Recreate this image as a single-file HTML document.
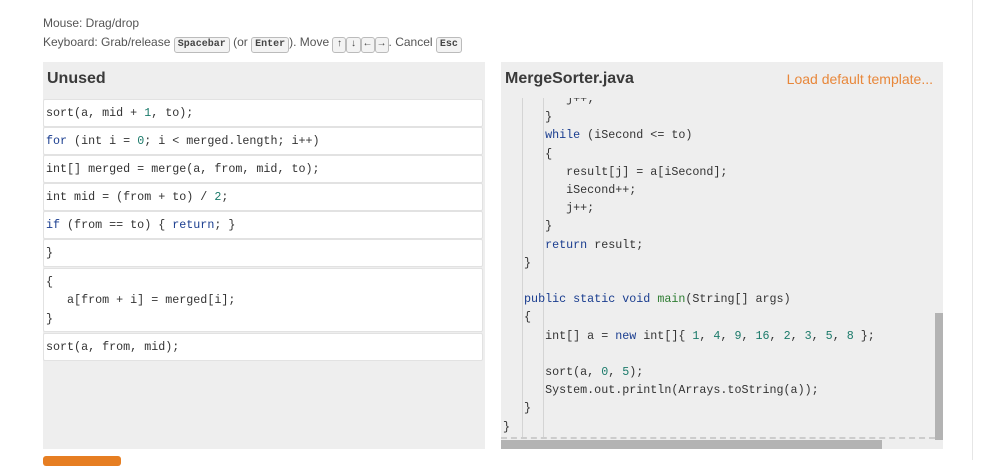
<!DOCTYPE html>
<html><head><meta charset="utf-8"><style>
body{margin:0;width:991px;height:460px;overflow:hidden;background:#fff;font-family:"Liberation Sans",sans-serif;position:relative}
.vl{position:absolute;left:972px;top:0;width:1px;height:460px;background:#e6e6e6}
.info{position:absolute;left:43px;top:14px;font-size:12px;color:#555;line-height:19px}
kbd{display:inline-block;font-family:"Liberation Mono",monospace;font-size:10px;font-weight:bold;color:#444;background:#f3f3f3;border:1px solid #bbb;border-radius:3px;padding:0 3px;line-height:14px}
.panel{position:absolute;top:62px;height:387px;background:#eee}
.h{position:absolute;top:8px;left:4px;font-size:16px;font-weight:bold;color:#3a3a3a}
.mono{font-family:"Liberation Mono",monospace;font-size:11.7px;color:#333}
.blk{position:absolute;left:0;width:440px;background:#fff;border:1px solid #e2e2e2;border-radius:2px;box-sizing:border-box;padding:0 2px;line-height:18.3px;white-space:pre}
.k{color:#1a3d8f}.n{color:#1b7a6a}.f{color:#2e7d32}.o{color:#777}
.code{position:absolute;left:0;top:36px;width:434px;height:340px;overflow:hidden}
.code pre{margin:0;position:absolute;left:2px;top:-8px;line-height:18.2px}
</style></head><body>
<div class="vl"></div>
<div class="info">Mouse: Drag/drop<br>Keyboard: Grab/release <kbd>Spacebar</kbd> (or <kbd>Enter</kbd>). Move <kbd>↑</kbd><kbd>↓</kbd><kbd>←</kbd><kbd>→</kbd>. Cancel <kbd>Esc</kbd></div>

<div class="panel" style="left:43px;width:442px">
<div class="h">Unused</div>
<div class="mono">
<div class="blk" style="top:37px;height:28px;padding-top:4px">sort(a, mid + <span class="n">1</span>, to);</div>
<div class="blk" style="top:65px;height:28px;padding-top:4px"><span class="k">for</span> (int i = <span class="n">0</span>; i &lt; merged.length; i++)</div>
<div class="blk" style="top:93px;height:28px;padding-top:4px">int[] merged = merge(a, from, mid, to);</div>
<div class="blk" style="top:121px;height:28px;padding-top:4px">int mid = (from + to) / <span class="n">2</span>;</div>
<div class="blk" style="top:149px;height:28px;padding-top:4px"><span class="k">if</span> (from == to) { <span class="k">return</span>; }</div>
<div class="blk" style="top:177px;height:28px;padding-top:4px">}</div>
<div class="blk" style="top:206px;height:64px;padding-top:4px">{
   a[from + i] = merged[i];
}</div>
<div class="blk" style="top:271px;height:28px;padding-top:4px">sort(a, from, mid);</div>
</div>
</div>

<div class="panel" style="left:501px;width:442px">
<div class="h">MergeSorter.java</div>
<div style="position:absolute;right:10px;top:9px;font-size:14px;color:#e8873a">Load default template...</div>
<div class="code mono">
<div style="position:absolute;left:21px;top:0;width:1px;height:345px;background:#d4d4d4"></div>
<div style="position:absolute;left:42px;top:0;width:1px;height:345px;background:#d4d4d4"></div>
<pre>         j++;
      }
      <span class="k">while</span> (iSecond &lt;= to)
      {
         result[j] = a[iSecond];
         iSecond++;
         j++;
      }
      <span class="k">return</span> result;
   }

   <span class="k">public static void</span> <span class="f">main</span>(String[] args)
   {
      int[] a = <span class="k">new</span> int[]{ <span class="n">1</span>, <span class="n">4</span>, <span class="n">9</span>, <span class="n">16</span>, <span class="n">2</span>, <span class="n">3</span>, <span class="n">5</span>, <span class="n">8</span> };

      sort(a, <span class="n">0</span>, <span class="n">5</span>);
      System.out.println(Arrays.toString(a));
   }
}</pre>
</div>
<div style="position:absolute;left:0;top:375px;width:434px;border-top:2px dashed #ccc"></div>
<div style="position:absolute;left:434px;top:251px;width:8px;height:127px;background:#b3b3b3"></div>
<div style="position:absolute;left:0;top:378px;width:381px;height:9px;background:#b3b3b3"></div>
</div>

<div style="position:absolute;left:43px;top:456px;width:78px;height:10px;background:#e67e22;border-radius:3px"></div>
</body></html>
